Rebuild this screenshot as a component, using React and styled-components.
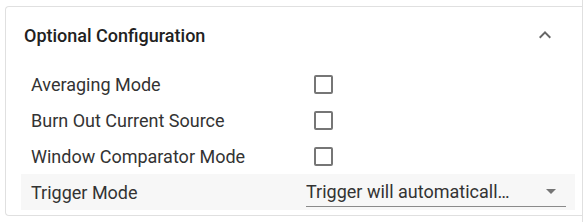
import React from 'react';
import styled, { createGlobalStyle } from 'styled-components';

const GlobalStyle = createGlobalStyle`
  body {
    margin: 0;
    background: #fff;
    font-family: Roboto, "Liberation Sans", sans-serif;
  }
`;

const Frame = styled.div`
  width: 583px;
  height: 222px;
  box-sizing: border-box;
  border-right: 1px solid #e0e0e0;
  padding: 6px 0 0 5px;
`;

const Card = styled.section`
  border: 1px solid #e0e0e0;
  border-right: none;
  border-radius: 4px 0 0 4px;
  background: #fff;
`;

const Header = styled.div`
  display: flex;
  align-items: center;
  justify-content: space-between;
  height: 56px;
  padding: 0 25px 0 18px;
`;

const Title = styled.h2`
  margin: 0;
  font-size: 18px;
  font-weight: 500;
  color: #212121;
`;

const Rows = styled.div`
  padding: 3px 7px 5px 15px;
`;

const Row = styled.div`
  display: grid;
  grid-template-columns: 275px 1fr;
  align-items: center;
  height: 36px;
  padding-left: 10px;
  background: ${(p) => (p.$active ? '#f7f7f7' : 'transparent')};
`;

const Label = styled.span`
  font-size: 18px;
  color: #333;
`;

const Box = styled.span`
  display: block;
  width: 15px;
  height: 15px;
  margin-left: 8px;
  border: 2px solid #767676;
  border-radius: 2px;
`;

const Select = styled.div`
  display: flex;
  align-items: center;
  width: 260px;
  height: 28px;
  box-sizing: border-box;
  margin-top: 2px;
  border-bottom: 1px solid #8a8a8a;
  padding-bottom: 2px;
`;

const SelectText = styled.span`
  flex: 1;
  min-width: 0;
  font-size: 18px;
  color: #333;
  white-space: nowrap;
  overflow: hidden;
  text-overflow: ellipsis;
  padding-right: 28px;
`;

const Caret = styled.span`
  width: 0;
  height: 0;
  margin-right: 10px;
  border-left: 5px solid transparent;
  border-right: 5px solid transparent;
  border-top: 5px solid #757575;
`;

const Chevron = () => (
  <svg width="24" height="24" viewBox="0 0 24 24">
    <path d="M7.41 15.41 12 10.83l4.59 4.58L18 14l-6-6-6 6z" fill="#666" />
  </svg>
);

const options = ['Averaging Mode', 'Burn Out Current Source', 'Window Comparator Mode'];

const App = () => (
  <>
    <GlobalStyle />
    <Frame>
      <Card>
        <Header>
          <Title>Optional Configuration</Title>
          <Chevron />
        </Header>
        <Rows>
          {options.map((o) => (
            <Row key={o}>
              <Label>{o}</Label>
              <Box />
            </Row>
          ))}
          <Row $active>
            <Label>Trigger Mode</Label>
            <Select>
              <SelectText>Trigger will automatically start conversions</SelectText>
              <Caret />
            </Select>
          </Row>
        </Rows>
      </Card>
    </Frame>
  </>
);

export default App;
